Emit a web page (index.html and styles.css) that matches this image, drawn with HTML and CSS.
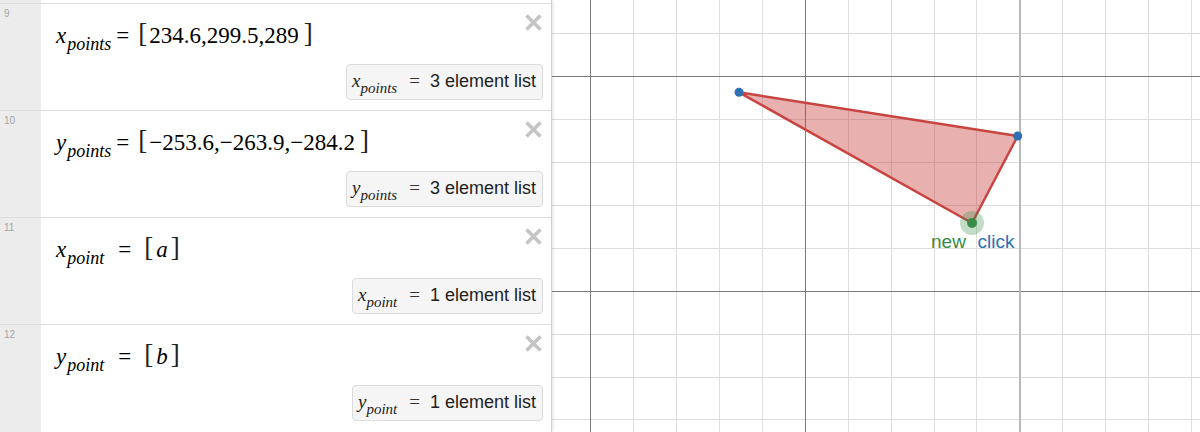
FILE: index.html
```html
<!DOCTYPE html>
<html>
<head>
<meta charset="utf-8">
<title>Graph</title>
<link rel="stylesheet" href="styles.css">
</head>
<body>
<div class="app">
  <aside class="panel">
    <div class="expr">
      <span class="num">9</span>
      <div class="expr-body">
        <div class="expr-top">
          <div class="formula"><span class="v">x</span><sub class="s">points</sub><span class="eq">=</span><span class="br">[</span><span class="n">234.6,299.5,289</span><span class="br">]</span></div>
          <div class="close"><svg viewBox="0 0 19 19" width="19" height="19"><path d="M2.5 2.5L16.5 16.5M16.5 2.5L2.5 16.5"/></svg></div>
        </div>
        <div class="result"><span class="rvar"><span class="rv">x</span><sub class="rs">points</sub></span><span class="req">=</span><span class="rt">3 element list</span></div>
      </div>
    </div>
    <div class="expr">
      <span class="num">10</span>
      <div class="expr-body">
        <div class="expr-top">
          <div class="formula"><span class="v">y</span><sub class="s">points</sub><span class="eq">=</span><span class="br">[</span><span class="n">−253.6,−263.9,−284.2</span><span class="br">]</span></div>
          <div class="close"><svg viewBox="0 0 19 19" width="19" height="19"><path d="M2.5 2.5L16.5 16.5M16.5 2.5L2.5 16.5"/></svg></div>
        </div>
        <div class="result"><span class="rvar"><span class="rv">y</span><sub class="rs">points</sub></span><span class="req">=</span><span class="rt">3 element list</span></div>
      </div>
    </div>
    <div class="expr">
      <span class="num">11</span>
      <div class="expr-body">
        <div class="expr-top">
          <div class="formula formula--wide"><span class="v">x</span><sub class="s">point</sub><span class="eq">=</span><span class="br">[</span><span class="n n--var">a</span><span class="br">]</span></div>
          <div class="close"><svg viewBox="0 0 19 19" width="19" height="19"><path d="M2.5 2.5L16.5 16.5M16.5 2.5L2.5 16.5"/></svg></div>
        </div>
        <div class="result"><span class="rvar"><span class="rv">x</span><sub class="rs">point</sub></span><span class="req">=</span><span class="rt">1 element list</span></div>
      </div>
    </div>
    <div class="expr">
      <span class="num">12</span>
      <div class="expr-body">
        <div class="expr-top">
          <div class="formula formula--wide"><span class="v">y</span><sub class="s">point</sub><span class="eq">=</span><span class="br">[</span><span class="n n--var">b</span><span class="br">]</span></div>
          <div class="close"><svg viewBox="0 0 19 19" width="19" height="19"><path d="M2.5 2.5L16.5 16.5M16.5 2.5L2.5 16.5"/></svg></div>
        </div>
        <div class="result"><span class="rvar"><span class="rv">y</span><sub class="rs">point</sub></span><span class="req">=</span><span class="rt">1 element list</span></div>
      </div>
    </div>
  </aside>
  <main class="graph">
    <svg class="graph-svg" viewBox="0 0 648 432" width="648" height="432">
      <g class="grid-minor">
        <path d="M81.5 0V432M124.5 0V432M167.5 0V432M210.5 0V432M296.5 0V432M339.5 0V432M382.5 0V432M424.5 0V432M510.5 0V432M553.5 0V432M596.5 0V432M639.5 0V432"/>
        <path d="M0 33.5H648M0 119.5H648M0 162.5H648M0 205.5H648M0 248.5H648M0 334.5H648M0 377.5H648M0 419.5H648"/>
      </g>
      <g class="grid-major">
        <path d="M38.5 0V432M253.5 0V432M0 76.5H648M0 291.5H648"/>
      </g>
      <path class="grid-axis" d="M468 0V432"/>
      <polygon class="tri" points="187,92.3 465.7,136 420,223"/>
      <circle class="pt-blue" cx="187" cy="92.3" r="4.5"/>
      <circle class="pt-blue" cx="465.7" cy="136" r="4.5"/>
      <circle class="pt-halo" cx="420" cy="223" r="12"/>
      <circle class="pt-green" cx="420" cy="223" r="5"/>
      <text class="lbl lbl-green" x="379" y="248">new</text>
      <text class="lbl lbl-blue" x="425.5" y="248">click</text>
    </svg>
  </main>
</div>
</body>
</html>
```

FILE: styles.css
```css
* { box-sizing: border-box; margin: 0; padding: 0; }
html, body { width: 1200px; height: 432px; overflow: hidden; background: #fff; }
body { font-family: "Liberation Sans", Arial, sans-serif; color: #000; }

.app { display: flex; height: 432px; }

.panel {
  width: 552px;
  flex: none;
  padding-top: 3px;
  border-right: 1px solid #cfcfcf;
  background: linear-gradient(to right, #ececec 0, #ececec 41px, #fff 41px);
  box-shadow: 1px 0 3px rgba(0, 0, 0, 0.12);
  position: relative;
  z-index: 1;
  overflow: hidden;
}

.expr { display: flex; height: 107px; border-top: 1px solid #dedede; }

.num {
  width: 41px;
  flex: none;
  padding: 4px 0 0 4px;
  font-size: 10px;
  line-height: 12px;
  color: #a5a5a5;
}

.expr-body { flex: 1; display: flex; flex-direction: column; padding: 9px 8px 0 15px; }

.expr-top { display: flex; justify-content: space-between; align-items: flex-start; height: 41px; }

.formula {
  margin-top: 9px;
  font-family: "Liberation Serif", "Times New Roman", serif;
  font-size: 23px;
  line-height: 28px;
  white-space: nowrap;
}
.formula .v { font-style: italic; }
.formula .s { font-style: italic; font-size: 18px; line-height: 0; vertical-align: -7px; margin-left: 1px; }
.formula .eq { margin: 0 9px 0 5px; }
.formula--wide .eq { margin: 0 13px 0 14px; }
.formula .br { font-size: 27px; line-height: 0; color: #222; vertical-align: 1px; }
.formula .n { margin: 0 5px 0 2px; }
.formula .n--var { font-style: italic; margin: 0 3px 0 3px; }

.close { width: 19px; height: 19px; flex: none; }
.close svg { display: block; }
.close path { stroke: #c4c4c4; stroke-width: 3.6; fill: none; }

.result {
  align-self: flex-end;
  margin-top: 10px;
  height: 36px;
  display: flex;
  align-items: baseline;
  padding: 0 6px 0 5px;
  border: 1px solid #dcdcdc;
  border-radius: 4px;
  background: #f5f5f5;
  line-height: 32px;
  white-space: nowrap;
}
.rvar { font-family: "Liberation Serif", "Times New Roman", serif; font-style: italic; color: #222; }
.rv { font-size: 19px; }
.rs { font-size: 15px; line-height: 0; vertical-align: -6px; }
.req { font-family: "Liberation Serif", "Times New Roman", serif; font-size: 19px; margin: 0 10px 0 12px; color: #333; }
.rt { font-size: 18px; color: #222; }

.graph { flex: 1; height: 432px; overflow: hidden; }
.graph-svg { display: block; }
.grid-minor path { stroke: #dddddd; stroke-width: 1; fill: none; }
.grid-major path { stroke: #7a7a7a; stroke-width: 1; fill: none; }
.grid-axis { stroke: #b8b8b8; stroke-width: 2; fill: none; }
.tri { fill: rgba(199, 68, 64, 0.42); stroke: #c74440; stroke-width: 2.5; stroke-linejoin: round; }
.pt-blue { fill: #2d70b3; }
.pt-green { fill: #388c46; }
.pt-halo { fill: rgba(56, 140, 70, 0.3); }
.lbl { font-family: "Liberation Sans", Arial, sans-serif; font-size: 19px; }
.lbl-green { fill: #388c46; }
.lbl-blue { fill: #2d70b3; }
```
